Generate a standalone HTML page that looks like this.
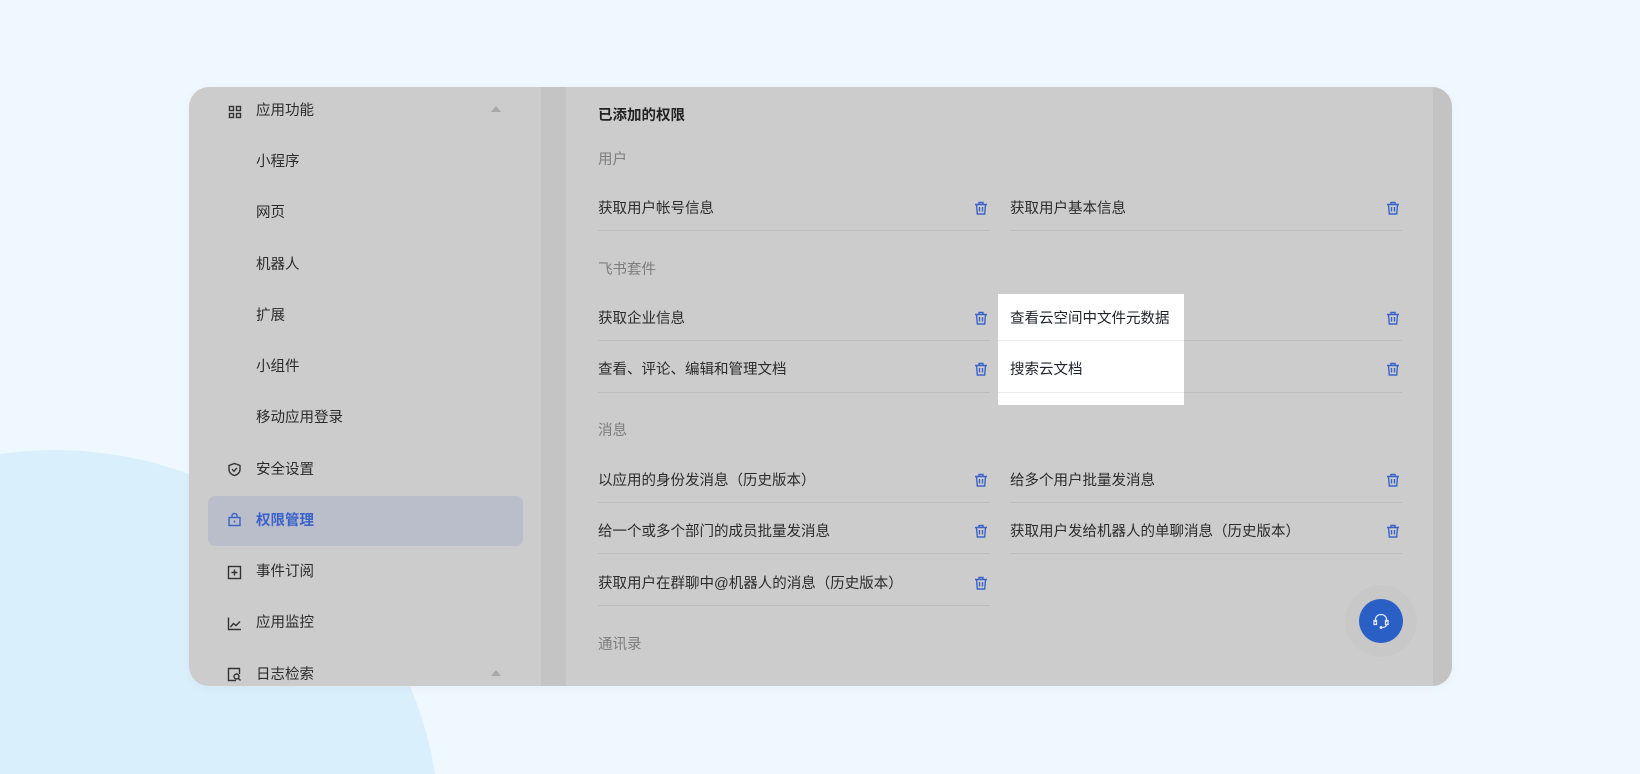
<!DOCTYPE html>
<html style="width:1640px;height:774px;overflow:hidden"><head><meta charset="utf-8"><style>
*{margin:0;padding:0;box-sizing:border-box}
html,body{width:1640px;height:774px;overflow:hidden}
body{background:#f0f8ff;position:relative;font-family:"Liberation Sans","Noto Sans CJK SC",sans-serif;font-size:14.5px;color:#2b2b2b}
.clip{position:absolute;left:0;top:0;width:1640px;height:774px;overflow:hidden}
.circ{position:absolute;left:-330px;top:450px;width:770px;height:770px;border-radius:50%;background:#d9f0fc}
.card{position:absolute;left:189px;top:87px;width:1263px;height:599px;border-radius:20px;background:#cccccc;overflow:hidden;box-shadow:0 2px 10px rgba(0,0,0,.04)}
.div{position:absolute;left:352px;top:0;width:25px;height:100%;background:#c4c4c4}
.scr{position:absolute;right:0;top:0;width:19px;height:100%;background:#c3c3c3}
.a{position:absolute;white-space:nowrap;line-height:20px}
.sel{position:absolute;left:19px;top:409px;width:315px;height:50px;border-radius:7px;background:#babdca}
.ln{position:absolute;height:1px;background:#bdbdbd}
.lab{color:#7d7d7d}
.hl{position:absolute;left:809px;top:207px;width:186px;height:111px;background:#fff}
.help{position:absolute;left:1170px;top:512px;width:44px;height:44px;border-radius:50%;background:#2a5fc6;box-shadow:0 0 0 14px rgba(0,0,0,.015)}
</style></head><body>
<div class="clip"><div class="circ"></div></div>
<div class="card">
<div class="div"></div><div class="scr"></div>
<div class="sel"></div>
<svg class="a" style="left:39px;top:18px" width="14" height="14" viewBox="0 0 14 14" fill="none" stroke="#333" stroke-width="1.4"><rect x="1.5" y="1.5" width="4" height="4"/><rect x="8.5" y="1.5" width="4" height="4"/><rect x="1.5" y="8.5" width="4" height="4"/><rect x="8.5" y="8.5" width="4" height="4"/></svg>
<div class="a" style="left:67px;top:14px">应用功能</div>
<svg class="a" style="left:302px;top:19px" width="10" height="6"><path d="M0 6L5 0L10 6Z" fill="#a8a8a8"/></svg>
<div class="a" style="left:67px;top:65px">小程序</div>
<div class="a" style="left:67px;top:116px">网页</div>
<div class="a" style="left:67px;top:168px">机器人</div>
<div class="a" style="left:67px;top:219px">扩展</div>
<div class="a" style="left:67px;top:270px">小组件</div>
<div class="a" style="left:67px;top:321px">移动应用登录</div>
<svg class="a" style="left:38px;top:375px" width="15" height="15" viewBox="0 0 15 15" fill="none" stroke="#333" stroke-width="1.4"><path d="M7.5 1.5L13 3.5V7.5C13 10.5 10.5 12.8 7.5 13.5C4.5 12.8 2 10.5 2 7.5V3.5Z"/><path d="M5 7.3L7 9.2L10 5.8"/></svg>
<div class="a" style="left:67px;top:373px">安全设置</div>
<svg class="a" style="left:38px;top:425px" width="15" height="15" viewBox="0 0 15 15" fill="none" stroke="#3a63c9" stroke-width="1.4"><rect x="2" y="5.5" width="11" height="8"/><path d="M5 5.5V3.8C5 2.5 6 1.5 7.5 1.5S10 2.5 10 3.8V5.5"/><path d="M7.5 8.5V10.5"/></svg>
<div class="a" style="left:67px;top:424px;color:#3a63c9;font-weight:bold">权限管理</div>
<svg class="a" style="left:38px;top:478px" width="15" height="15" viewBox="0 0 15 15" fill="none" stroke="#333" stroke-width="1.4"><rect x="1.5" y="1.5" width="12" height="12"/><path d="M7.5 4.5V10.5M4.5 7.5H10.5"/></svg>
<div class="a" style="left:67px;top:475px">事件订阅</div>
<svg class="a" style="left:38px;top:529px" width="15" height="15" viewBox="0 0 15 15" fill="none" stroke="#333" stroke-width="1.4"><path d="M1.5 1.5V13.5H14"/><path d="M3.5 11L6.5 7.5L9 9.5L13 5.5"/></svg>
<div class="a" style="left:67px;top:526px">应用监控</div>
<svg class="a" style="left:38px;top:580px" width="15" height="15" viewBox="0 0 15 15" fill="none" stroke="#333" stroke-width="1.4"><path d="M9 13.5H1.5V1.5H12.5V7"/><circle cx="9.5" cy="9.5" r="2.5"/><path d="M11.3 11.3L13.5 13.5"/></svg>
<div class="a" style="left:67px;top:578px">日志检索</div>
<svg class="a" style="left:302px;top:583px" width="10" height="6"><path d="M0 6L5 0L10 6Z" fill="#a8a8a8"/></svg>
<div class="hl"></div>
<div class="a" style="left:409px;top:19px;font-weight:bold;color:#222">已添加的权限</div>
<div class="a lab" style="left:409px;top:63px">用户</div>
<div class="a" style="left:409px;top:112px">获取用户帐号信息</div>
<div class="a" style="left:821px;top:112px">获取用户基本信息</div>
<div class="ln" style="left:409px;top:143px;width:392px"></div>
<div class="ln" style="left:821px;top:143px;width:392px"></div>
<div class="a lab" style="left:409px;top:173px">飞书套件</div>
<div class="a" style="left:409px;top:222px">获取企业信息</div>
<div class="a" style="left:821px;top:222px;color:#1f2329">查看云空间中文件元数据</div>
<div class="ln" style="left:409px;top:253px;width:392px"></div>
<div class="ln" style="left:821px;top:253px;width:392px"></div>
<div class="ln" style="left:809px;top:253px;width:186px;background:#ececec"></div>
<div class="a" style="left:409px;top:273px">查看、评论、编辑和管理文档</div>
<div class="a" style="left:821px;top:273px;color:#1f2329">搜索云文档</div>
<div class="ln" style="left:409px;top:305px;width:392px"></div>
<div class="ln" style="left:821px;top:305px;width:392px"></div>
<div class="ln" style="left:809px;top:305px;width:186px;background:#ececec"></div>
<div class="a lab" style="left:409px;top:334px">消息</div>
<div class="a" style="left:409px;top:384px">以应用的身份发消息（历史版本）</div>
<div class="a" style="left:821px;top:384px">给多个用户批量发消息</div>
<div class="ln" style="left:409px;top:415px;width:392px"></div>
<div class="ln" style="left:821px;top:415px;width:392px"></div>
<div class="a" style="left:409px;top:435px">给一个或多个部门的成员批量发消息</div>
<div class="a" style="left:821px;top:435px">获取用户发给机器人的单聊消息（历史版本）</div>
<div class="ln" style="left:409px;top:466px;width:392px"></div>
<div class="ln" style="left:821px;top:466px;width:392px"></div>
<div class="a" style="left:409px;top:487px">获取用户在群聊中@机器人的消息（历史版本）</div>
<div class="ln" style="left:409px;top:518px;width:392px"></div>
<div class="a lab" style="left:409px;top:548px">通讯录</div>
<svg width="0" height="0" style="position:absolute"><defs><g id="t" fill="none" stroke="#3a63c9" stroke-width="1.4"><path d="M1 3.5H13M5 3.5V1.5H9V3.5M2.5 3.5L3.3 13H10.7L11.5 3.5M5.5 6V10.5M8.5 6V10.5"/></g></defs></svg>
<svg class="a" style="left:785px;top:114px" width="14" height="14"><use href="#t"/></svg>
<svg class="a" style="left:1197px;top:114px" width="14" height="14"><use href="#t"/></svg>
<svg class="a" style="left:785px;top:224px" width="14" height="14"><use href="#t"/></svg>
<svg class="a" style="left:1197px;top:224px" width="14" height="14"><use href="#t"/></svg>
<svg class="a" style="left:785px;top:275px" width="14" height="14"><use href="#t"/></svg>
<svg class="a" style="left:1197px;top:275px" width="14" height="14"><use href="#t"/></svg>
<svg class="a" style="left:785px;top:386px" width="14" height="14"><use href="#t"/></svg>
<svg class="a" style="left:1197px;top:386px" width="14" height="14"><use href="#t"/></svg>
<svg class="a" style="left:785px;top:437px" width="14" height="14"><use href="#t"/></svg>
<svg class="a" style="left:1197px;top:437px" width="14" height="14"><use href="#t"/></svg>
<svg class="a" style="left:785px;top:489px" width="14" height="14"><use href="#t"/></svg>
<div class="help"><svg style="position:absolute;left:12px;top:12px" width="20" height="20" viewBox="0 0 20 20" fill="none" stroke="#dfe6f5" stroke-width="1.3"><path d="M4.5 11V8.5C4.5 5.5 7 3.5 10 3.5S15.5 5.5 15.5 8.5V11"/><rect x="3" y="9.5" width="2.5" height="4"/><rect x="14.5" y="9.5" width="2.5" height="4"/><path d="M15.5 13.5C15.5 15.5 13.5 16.5 11 16.5"/><circle cx="10" cy="16.5" r=".8" fill="#dfe6f5"/></svg></div>
</div>
</body></html>
